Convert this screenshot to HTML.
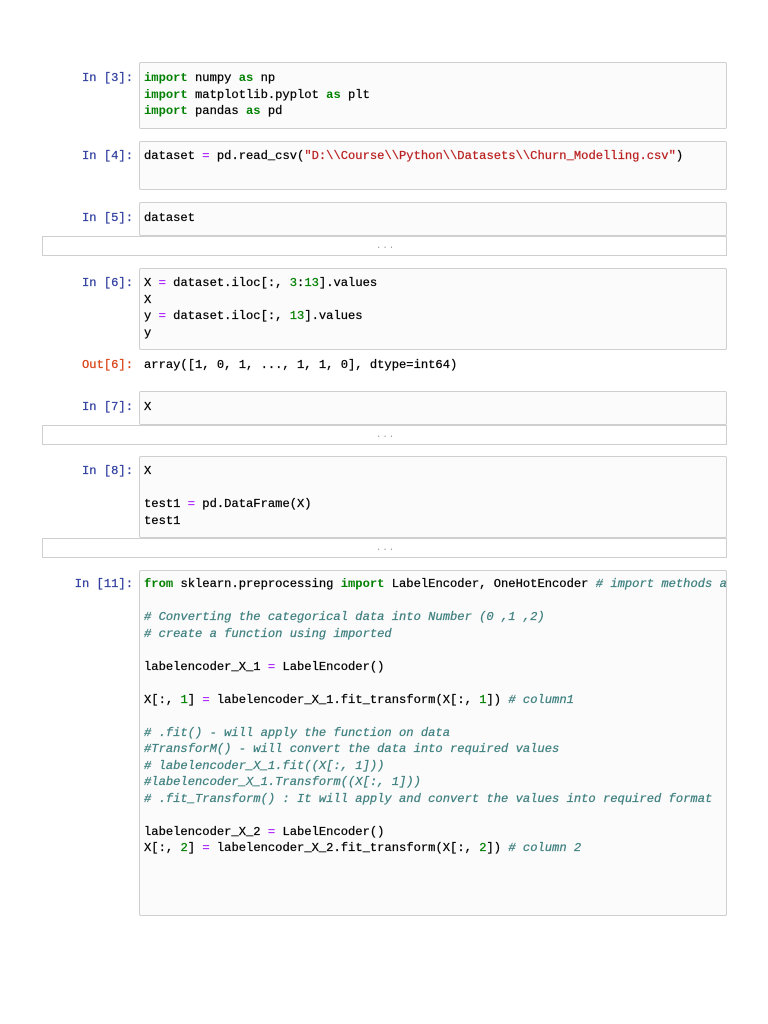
<!DOCTYPE html>
<html><head><meta charset="utf-8"><style>
body{margin:0;width:768px;height:1024px;background:#fff;position:relative;overflow:hidden;font-family:"Liberation Mono",monospace;font-size:12.15px;color:#000;-webkit-text-stroke:0.25px;}
.box{position:absolute;left:139px;width:586px;border:1px solid #cfcfcf;background:#fbfbfb;border-radius:2px;}
.col{position:absolute;left:42px;width:683px;height:18px;border:1px solid #cfcfcf;background:#fff;}
.col span{position:absolute;left:333px;top:4px;color:#999;font-size:9px;letter-spacing:1px;-webkit-text-stroke:0;}
pre{position:absolute;left:144px;margin:0;font:inherit;line-height:16.5px;white-space:pre;overflow:hidden;width:582px;}
.p{position:absolute;right:635px;color:#303f9f;line-height:16.5px;}
.o{color:#d84315;}
.k{color:#008000;font-weight:bold;-webkit-text-stroke:0}.s{color:#ba2121}.c{color:#408080;font-style:italic}.n{color:#008000}.e{color:#aa22ff}
</style></head><body>
<div class="box" style="top:62px;height:65px"></div>
<div class="p" style="top:70px">In [3]:</div>
<pre style="top:70px"><span class="k">import</span> numpy <span class="k">as</span> np
<span class="k">import</span> matplotlib.pyplot <span class="k">as</span> plt
<span class="k">import</span> pandas <span class="k">as</span> pd</pre>

<div class="box" style="top:141px;height:47px"></div>
<div class="p" style="top:148px">In [4]:</div>
<pre style="top:148px">dataset <span class="e">=</span> pd.read_csv(<span class="s">"D:\\Course\\Python\\Datasets\\Churn_Modelling.csv"</span>)</pre>

<div class="box" style="top:202px;height:32px"></div>
<div class="p" style="top:210px">In [5]:</div>
<pre style="top:210px">dataset</pre>
<div class="col" style="top:236px"><span>...</span></div>

<div class="box" style="top:268px;height:80px"></div>
<div class="p" style="top:275px">In [6]:</div>
<pre style="top:275px">X <span class="e">=</span> dataset.iloc[:, <span class="n">3</span>:<span class="n">13</span>].values
X
y <span class="e">=</span> dataset.iloc[:, <span class="n">13</span>].values
y</pre>
<div class="p o" style="top:357px">Out[6]:</div>
<pre style="top:357px">array([1, 0, 1, ..., 1, 1, 0], dtype=int64)</pre>

<div class="box" style="top:391px;height:32px"></div>
<div class="p" style="top:399px">In [7]:</div>
<pre style="top:399px">X</pre>
<div class="col" style="top:425px"><span>...</span></div>

<div class="box" style="top:456px;height:80px"></div>
<div class="p" style="top:463px">In [8]:</div>
<pre style="top:463px">X

test1 <span class="e">=</span> pd.DataFrame(X)
test1</pre>
<div class="col" style="top:538px"><span>...</span></div>

<div class="box" style="top:570px;height:344px"></div>
<div class="p" style="top:576px">In [11]:</div>
<pre style="top:576px"><span class="k">from</span> sklearn.preprocessing <span class="k">import</span> LabelEncoder, OneHotEncoder <span class="c"># import methods and</span>

<span class="c"># Converting the categorical data into Number (0 ,1 ,2)</span>
<span class="c"># create a function using imported</span>

labelencoder_X_1 <span class="e">=</span> LabelEncoder()

X[:, <span class="n">1</span>] <span class="e">=</span> labelencoder_X_1.fit_transform(X[:, <span class="n">1</span>]) <span class="c"># column1</span>

<span class="c"># .fit() - will apply the function on data</span>
<span class="c">#TransforM() - will convert the data into required values</span>
<span class="c"># labelencoder_X_1.fit((X[:, 1]))</span>
<span class="c">#labelencoder_X_1.Transform((X[:, 1]))</span>
<span class="c"># .fit_Transform() : It will apply and convert the values into required format</span>

labelencoder_X_2 <span class="e">=</span> LabelEncoder()
X[:, <span class="n">2</span>] <span class="e">=</span> labelencoder_X_2.fit_transform(X[:, <span class="n">2</span>]) <span class="c"># column 2</span></pre>
</body></html>
